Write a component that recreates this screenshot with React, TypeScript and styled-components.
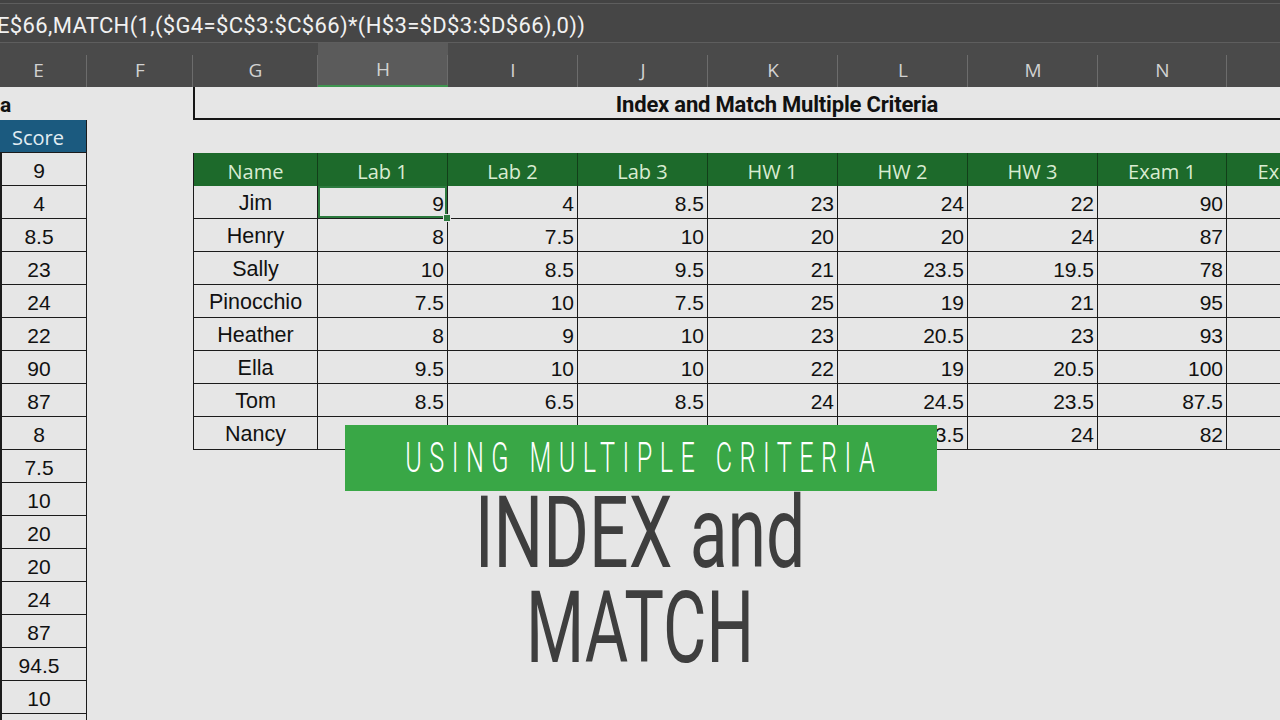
import React from "react";
import styled, { createGlobalStyle, css } from "styled-components";

const GlobalStyle = createGlobalStyle`
  html, body { margin: 0; padding: 0; background: #e6e6e6; overflow: hidden; }
  #root { width: 1280px; height: 720px; }
`;

const Screen = styled.div`
  position: relative;
  width: 1280px;
  height: 720px;
  overflow: hidden;
  background: #e6e6e6;
  display: flex;
  flex-direction: column;
`;

const Chrome = styled.div`
  background: #434343;
  padding-top: 3px;
  display: flex;
  flex-direction: column;
`;

const FormulaBar = styled.div`
  height: 40px;
  box-sizing: border-box;
  border-top: 1px solid #5e5e5e;
  border-bottom: 1px solid #5e5e5e;
  background: #464646;
  display: flex;
  align-items: center;
  padding-top: 4px;
  overflow: hidden;
  white-space: nowrap;
  font-family: Roboto, "Liberation Sans", sans-serif;
  font-size: 22px;
  color: #f1f1f1;
`;

const FormulaText = styled.span`
  margin-left: -3px;
  letter-spacing: 0.35px;
`;

const COLS = "87px 106px 125px 130px 130px 130px 130px 130px 130px 129px 130px";

const ColumnHeaders = styled.div`
  height: 44px;
  display: grid;
  grid-template-columns: ${COLS};
  background: #4a4a4a;
`;

const ColHead = styled.div<{ $active?: boolean; $shift?: number }>`
  display: flex;
  align-items: center;
  justify-content: center;
  box-sizing: border-box;
  padding-right: ${(p) => p.$shift ?? 0}px;
  padding-top: 10px;
  font-family: "Open Sans", Roboto, sans-serif;
  font-size: 19px;
  color: #d2d2d2;
  background: linear-gradient(#6c6c6c, #6c6c6c) right 12px / 1px calc(100% - 12px) no-repeat
    ${(p) => (p.$active ? "#5b5b5b" : "transparent")};
  ${(p) =>
    p.$active &&
    css`
      border-bottom: 2px solid #3f9650;
    `}
`;

const Sheet = styled.div`
  flex: 1;
  display: flex;
  overflow: hidden;
`;

const LeftCol = styled.div`
  width: 87px;
  flex: none;
  display: flex;
  flex-direction: column;
`;

const RowCell = styled.div`
  height: 33px;
  box-sizing: border-box;
  display: flex;
  align-items: center;
  flex: none;
  padding-top: 3px;
`;

const ClipTitle = styled(RowCell)`
  font-family: Roboto, "Liberation Sans", sans-serif;
  font-weight: 700;
  font-size: 21px;
  color: #111;
  padding-left: 0;
`;

const ScoreHead = styled(RowCell)`
  justify-content: center;
  padding-right: 10px;
  background: #1b5a7f;
  color: #e2edf3;
  font-family: "Open Sans", Roboto, sans-serif;
  font-size: 20px;
  border-right: 1px solid #1b1b1b;
  border-bottom: 1px solid #1b1b1b;
`;

const ScoreCell = styled(RowCell)`
  justify-content: center;
  padding-right: 10px;
  font-family: "Liberation Sans", Arial, sans-serif;
  font-size: 21px;
  color: #111;
  border-left: 2px solid #1b1b1b;
  border-right: 1px solid #1b1b1b;
  border-bottom: 1px solid #1b1b1b;
`;

const Spacer = styled.div<{ $w: number }>`
  width: ${(p) => p.$w}px;
  flex: none;
`;

const Main = styled.div`
  flex: 1;
  display: flex;
  flex-direction: column;
  overflow: hidden;
`;

const TitleBox = styled.div`
  width: 1166px;
  flex: none;
  height: 33px;
  box-sizing: border-box;
  padding-top: 3px;
  border-left: 2px solid #151515;
  border-bottom: 2px solid #151515;
  display: flex;
  align-items: center;
  justify-content: center;
  font-family: Roboto, "Liberation Sans", sans-serif;
  font-weight: 700;
  font-size: 22px;
  letter-spacing: -0.2px;
  color: #111;
`;

const BlankRow = styled.div`
  height: 33px;
  flex: none;
`;

const Table = styled.div`
  display: grid;
  grid-template-columns: 125px 130px 130px 130px 130px 130px 130px 129px 130px;
  grid-auto-rows: 33px;
  width: 1164px;
  flex: none;
`;

const HeadCell = styled.div<{ $first?: boolean }>`
  box-sizing: border-box;
  background: #1d6a2b;
  color: #d9ecd2;
  display: flex;
  align-items: center;
  justify-content: center;
  padding-top: 3px;
  font-family: "Open Sans", Roboto, sans-serif;
  font-size: 20px;
  border-right: 1px solid #123f19;
  ${(p) =>
    p.$first &&
    css`
      border-left: 1px solid #1b1b1b;
    `}
`;

const DataCell = styled.div<{ $name?: boolean; $selected?: boolean }>`
  position: relative;
  box-sizing: border-box;
  display: flex;
  align-items: center;
  justify-content: ${(p) => (p.$name ? "center" : "flex-end")};
  padding-right: ${(p) => (p.$name ? 0 : 3)}px;
  padding-top: 3px;
  font-family: "Liberation Sans", Arial, sans-serif;
  font-size: ${(p) => (p.$name ? 21.5 : 21)}px;
  color: #111;
  border-right: 1px solid #1b1b1b;
  border-bottom: 1px solid #1b1b1b;
  ${(p) =>
    p.$name &&
    css`
      border-left: 1px solid #1b1b1b;
    `}
  ${(p) =>
    p.$selected &&
    css`
      box-shadow: inset 0 0 0 2px #2c7a3e;
      &::after {
        content: "";
        position: absolute;
        right: -4px;
        bottom: -4px;
        width: 6px;
        height: 6px;
        background: #2c7a3e;
        border: 1px solid #e6e6e6;
        z-index: 2;
      }
    `}
`;

const Banner = styled.div`
  position: absolute;
  left: 345px;
  top: 425px;
  width: 592px;
  height: 66px;
  background: #39a746;
  display: flex;
  align-items: center;
  justify-content: center;
  overflow: hidden;
  z-index: 5;
`;

const BannerText = styled.span`
  display: inline-block;
  white-space: nowrap;
  font-family: Roboto, "Open Sans", sans-serif;
  font-weight: 300;
  font-size: 42px;
  line-height: 42px;
  letter-spacing: 12.4px;
  color: #ffffff;
  transform: scaleX(0.6);
  padding-left: 8px;
`;

const BigTitle = styled.div`
  position: absolute;
  left: 0;
  right: 0;
  top: 485px;
  z-index: 5;
  font-family: Roboto, "Open Sans", sans-serif;
  font-weight: 400;
  font-size: 101px;
  line-height: 95px;
  color: #3e3e3e;
  text-align: center;
`;

const BigLine = styled.div<{ $scale: number }>`
  white-space: nowrap;
  transform: scaleX(${(p) => p.$scale});
  transform-origin: 640px 50%;
`;

const letters = ["E", "F", "G", "H", "I", "J", "K", "L", "M", "N", "O"];

const scoreValues = ["9", "4", "8.5", "23", "24", "22", "90", "87", "8", "7.5", "10", "20", "20", "24", "87", "94.5", "10", "9"];

const headers = ["Name", "Lab 1", "Lab 2", "Lab 3", "HW 1", "HW 2", "HW 3", "Exam 1", "Exam 2"];

const rows: string[][] = [
  ["Jim", "9", "4", "8.5", "23", "24", "22", "90", "88"],
  ["Henry", "8", "7.5", "10", "20", "20", "24", "87", "91"],
  ["Sally", "10", "8.5", "9.5", "21", "23.5", "19.5", "78", "85"],
  ["Pinocchio", "7.5", "10", "7.5", "25", "19", "21", "95", "97"],
  ["Heather", "8", "9", "10", "23", "20.5", "23", "93", "90"],
  ["Ella", "9.5", "10", "10", "22", "19", "20.5", "100", "98"],
  ["Tom", "8.5", "6.5", "8.5", "24", "24.5", "23.5", "87.5", "89"],
  ["Nancy", "9", "8", "9", "22", "23.5", "24", "82", "80"],
];

export default function App() {
  return (
    <Screen>
      <GlobalStyle />
      <Chrome>
        <FormulaBar>
          <FormulaText>E$66,MATCH(1,($G4=$C$3:$C$66)*(H$3=$D$3:$D$66),0))</FormulaText>
        </FormulaBar>
        <ColumnHeaders>
          {letters.map((l, i) => (
            <ColHead key={l} $active={l === "H"} $shift={i === 0 ? 10 : 0}>
              {l}
            </ColHead>
          ))}
        </ColumnHeaders>
      </Chrome>
      <Sheet>
        <LeftCol>
          <ClipTitle>a</ClipTitle>
          <ScoreHead>Score</ScoreHead>
          {scoreValues.map((v, i) => (
            <ScoreCell key={i}>{v}</ScoreCell>
          ))}
        </LeftCol>
        <Spacer $w={106} />
        <Main>
          <TitleBox>Index and Match Multiple Criteria</TitleBox>
          <BlankRow />
          <Table>
            {headers.map((h, i) => (
              <HeadCell key={h} $first={i === 0}>
                {h}
              </HeadCell>
            ))}
            {rows.map((r, ri) =>
              r.map((v, ci) => (
                <DataCell key={`${ri}-${ci}`} $name={ci === 0} $selected={ri === 0 && ci === 1}>
                  {v}
                </DataCell>
              ))
            )}
          </Table>
        </Main>
      </Sheet>
      <Banner>
        <BannerText>USING MULTIPLE CRITERIA</BannerText>
      </Banner>
      <BigTitle>
        <BigLine $scale={0.69}>INDEX and</BigLine>
        <BigLine $scale={0.66}>MATCH</BigLine>
      </BigTitle>
    </Screen>
  );
}
